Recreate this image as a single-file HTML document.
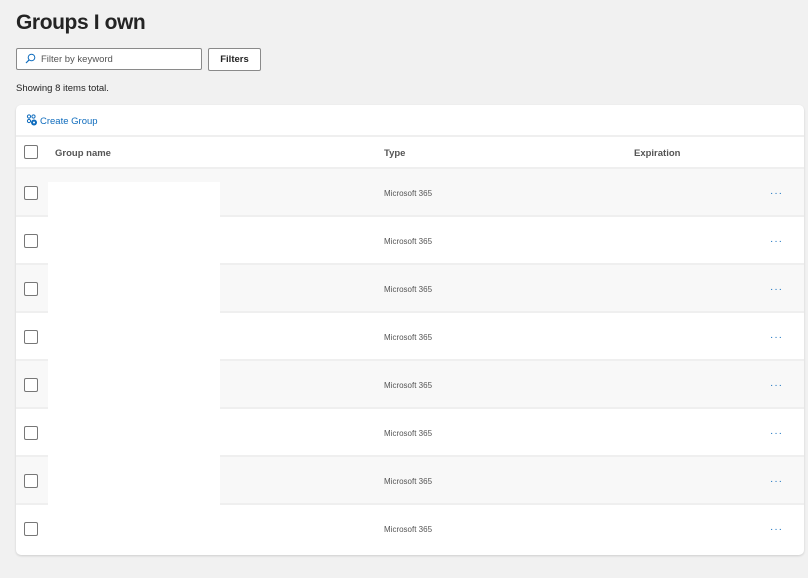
<!DOCTYPE html>
<html><head><meta charset="utf-8"><style>
body{margin:0;width:808px;height:578px;background:#f1f1f1;font-family:"Liberation Sans",sans-serif;position:relative;overflow:hidden}
.a{position:absolute}
h1{position:absolute;left:16px;top:11px;margin:0;font-size:21px;font-weight:bold;color:#242424;letter-spacing:-0.4px}
.search{left:16px;top:48px;width:184px;height:20px;border:1px solid #8a8a8a;border-radius:2px;background:#fff;font-size:9.5px;color:#555}
.btn{left:208px;top:48px;width:51px;height:21px;border:1px solid #8a8a8a;border-radius:2px;background:#fff;font-size:9.5px;font-weight:bold;color:#242424;text-align:center;line-height:21px}
.card{left:16px;top:105px;width:788px;height:450px;background:#fff;border-radius:5px;box-shadow:0 1px 2px rgba(0,0,0,.15);overflow:hidden}
.row{position:absolute;left:0;width:788px;height:46px;border-top:2px solid #efefef}
.cb{position:absolute;left:8px;width:12px;height:12px;border:1px solid #777;border-radius:2px;background:#fff}
.t{position:absolute;font-size:8px;color:#555}
.dots{position:absolute;left:754px;font-size:10px;color:#0f6cbd;letter-spacing:1px}
.hd{position:absolute;font-size:9.5px;font-weight:bold;color:#555}
</style></head><body>
<h1>Groups I own</h1>
<div class="a search"><svg class="a" style="left:8px;top:4px" width="11" height="11" viewBox="0 0 11 11"><circle cx="6.5" cy="4.5" r="3.3" fill="none" stroke="#0f6cbd" stroke-width="1"/><path d="M4.2 6.8L1 10" stroke="#0f6cbd" stroke-width="1.2"/></svg><span class="a" style="left:24px;top:5px">Filter by keyword</span></div>
<div class="a btn">Filters</div>
<div class="a" style="left:16px;top:83px;font-size:9.5px;color:#242424">Showing 8 items total.</div>
<div class="a card">
<svg class="a" style="left:10px;top:9px" width="12" height="12" viewBox="0 0 12 12"><circle cx="3" cy="2.5" r="1.6" fill="none" stroke="#0f6cbd"/><circle cx="7.5" cy="2.5" r="1.6" fill="none" stroke="#0f6cbd"/><circle cx="3" cy="7" r="1.6" fill="none" stroke="#0f6cbd"/><circle cx="8" cy="8.5" r="3" fill="#0f6cbd"/><circle cx="8" cy="8.5" r="1" fill="#fff"/></svg>
<div class="a" style="left:24px;top:11px;font-size:9.5px;color:#0f6cbd">Create Group</div>
<div class="row" style="top:30px;height:30px">
<div class="cb" style="top:8px"></div>
<div class="hd" style="left:39px;top:11px">Group name</div>
<div class="hd" style="left:368px;top:11px">Type</div>
<div class="hd" style="left:618px;top:11px">Expiration</div>
</div>
<div class="row" style="top:62px;background:#f8f8f8"><div class="cb" style="top:17px"></div><div class="t" style="left:368px;top:20px">Microsoft 365</div><div class="dots" style="top:19px">···</div></div>
<div class="row" style="top:110px"><div class="cb" style="top:17px"></div><div class="t" style="left:368px;top:20px">Microsoft 365</div><div class="dots" style="top:19px">···</div></div>
<div class="row" style="top:158px;background:#f8f8f8"><div class="cb" style="top:17px"></div><div class="t" style="left:368px;top:20px">Microsoft 365</div><div class="dots" style="top:19px">···</div></div>
<div class="row" style="top:206px"><div class="cb" style="top:17px"></div><div class="t" style="left:368px;top:20px">Microsoft 365</div><div class="dots" style="top:19px">···</div></div>
<div class="row" style="top:254px;background:#f8f8f8"><div class="cb" style="top:17px"></div><div class="t" style="left:368px;top:20px">Microsoft 365</div><div class="dots" style="top:19px">···</div></div>
<div class="row" style="top:302px"><div class="cb" style="top:17px"></div><div class="t" style="left:368px;top:20px">Microsoft 365</div><div class="dots" style="top:19px">···</div></div>
<div class="row" style="top:350px;background:#f8f8f8"><div class="cb" style="top:17px"></div><div class="t" style="left:368px;top:20px">Microsoft 365</div><div class="dots" style="top:19px">···</div></div>
<div class="row" style="top:398px"><div class="cb" style="top:17px"></div><div class="t" style="left:368px;top:20px">Microsoft 365</div><div class="dots" style="top:19px">···</div></div>
<div class="a" style="left:32px;top:77px;width:172px;height:323px;background:#fff"></div>
</div>
</body></html>
